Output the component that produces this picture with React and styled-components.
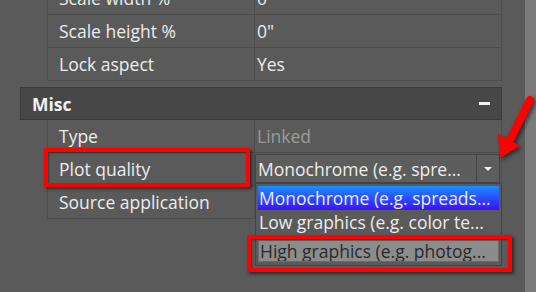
import styled, { createGlobalStyle } from 'styled-components'

const Global = createGlobalStyle`
  html, body {
    margin: 0;
    padding: 0;
    background: #5a5a5a;
    font-family: 'Open Sans', 'Noto Sans', sans-serif;
  }
`

const Page = styled.div`
  position: relative;
  width: 536px;
  height: 292px;
  overflow: hidden;
  display: flex;
  background: #5a5a5a;
`

const Main = styled.div`
  flex: 1;
  padding: 0 23px 0 20px;
  margin-top: -18px;
`

const Scrollbar = styled.div`
  width: 11px;
  background: #7b7b7b;
`

const Grid = styled.div`
  margin-left: 27px;
  border-left: 1px solid #4e4e4e;
  border-right: 1px solid #4e4e4e;
`

const Row = styled.div`
  display: grid;
  grid-template-columns: 207px 1fr;
  height: 32px;
  border-bottom: 1px solid #4c4c4c;
`

const Label = styled.div`
  display: flex;
  align-items: center;
  padding-left: 11px;
  font-size: 17.5px;
  color: #ececec;
  border-right: 1px solid #4c4c4c;
  white-space: nowrap;
`

const Value = styled.div`
  position: relative;
  display: flex;
  align-items: center;
  padding-left: 2px;
  font-size: 17.5px;
  color: ${(p) => (p.$muted ? '#9c9c9c' : '#ececec')};
  white-space: nowrap;
`

const Gap = styled.div`
  height: 6px;
`

const Section = styled.div`
  height: 31px;
  display: flex;
  align-items: center;
  justify-content: space-between;
  padding: 0 11px 0 11px;
  background: #474747;
  border: 1px solid #3b3b3b;
  font-size: 17.5px;
  font-weight: 700;
  color: #f2f2f2;
`

const Minus = styled.span`
  width: 11px;
  height: 3px;
  background: #f4f4f4;
`

const Combo = styled.div`
  position: absolute;
  left: 0;
  top: 1px;
  width: 245px;
  height: 29px;
  display: flex;
  background: #5d5d5d;
  border: 1px solid #444;
  box-sizing: border-box;
`

const ComboText = styled.div`
  flex: 1;
  display: flex;
  align-items: center;
  padding-left: 2px;
  font-size: 17.5px;
  color: #ececec;
  overflow: hidden;
`

const ComboButton = styled.div`
  width: 22px;
  border-left: 1px solid #444;
  display: flex;
  align-items: center;
  justify-content: center;
  &::after {
    content: '';
    border-left: 4px solid transparent;
    border-right: 4px solid transparent;
    border-top: 4px solid #f0f0f0;
  }
`

const List = styled.div`
  position: absolute;
  left: 0;
  top: 30px;
  width: 247px;
  padding: 2px 2px 3px 2px;
  box-sizing: border-box;
  background: #5a5a5a;
  border: 1px solid #444;
  z-index: 2;
`

const Item = styled.div`
  display: flex;
  align-items: center;
  padding-left: 1px;
  overflow: hidden;
  font-size: 17.5px;
  white-space: nowrap;
  color: ${(p) => (p.$hover ? '#2a2a2a' : '#ececec')};
  background: ${(p) =>
    p.$selected
      ? 'linear-gradient(#1c8dff, #3a10ff)'
      : p.$hover
      ? '#8c8c8c'
      : 'transparent'};
  margin-top: ${(p) => (p.$hover ? '6px' : '0')};
  height: ${(p) => (p.$hover ? '20px' : '24px')};
  border: ${(p) => (p.$hover ? '1px solid #6a6a6a' : 'none')};
`

const Mark = styled.div`
  position: absolute;
  box-sizing: border-box;
  border: 4px solid #ff0000;
  box-shadow: 2px 2px 3px rgba(0, 0, 0, 0.55), inset 1px 1px 2px rgba(0, 0, 0, 0.4);
  z-index: 3;
`

const Arrow = styled.svg`
  position: absolute;
  left: 494px;
  top: 96px;
  z-index: 3;
  filter: drop-shadow(2px 2px 2px rgba(0, 0, 0, 0.55));
`

export default function App() {
  return (
    <Page>
      <Global />
      <Main>
        <Grid>
          <Row>
            <Label>Scale width %</Label>
            <Value>0"</Value>
          </Row>
          <Row>
            <Label>Scale height %</Label>
            <Value>0"</Value>
          </Row>
          <Row>
            <Label>Lock aspect</Label>
            <Value>Yes</Value>
          </Row>
        </Grid>
        <Gap />
        <Section>
          Misc
          <Minus />
        </Section>
        <Grid>
          <Row>
            <Label>Type</Label>
            <Value $muted>Linked</Value>
          </Row>
          <Row>
            <Label>Plot quality</Label>
            <Value>
              <Combo>
                <ComboText>Monochrome (e.g. spre...</ComboText>
                <ComboButton />
              </Combo>
              <List>
                <Item $selected>Monochrome (e.g. spreads...</Item>
                <Item>Low graphics (e.g. color te...</Item>
                <Item $hover>High graphics (e.g. photog...</Item>
              </List>
            </Value>
          </Row>
          <Row>
            <Label>Source application</Label>
            <Value />
          </Row>
        </Grid>
      </Main>
      <Scrollbar />
      <Mark style={{ left: 44, top: 148, width: 206, height: 39 }} />
      <Mark style={{ left: 247, top: 235, width: 265, height: 37 }} />
      <Arrow width="42" height="66" viewBox="0 0 42 66">
        <path d="M36 4 L16 44" stroke="#ff0000" strokeWidth="8" strokeLinecap="round" fill="none" />
        <path d="M4 38 L26 50 L6 62 Z" fill="#ff0000" />
      </Arrow>
    </Page>
  )
}
